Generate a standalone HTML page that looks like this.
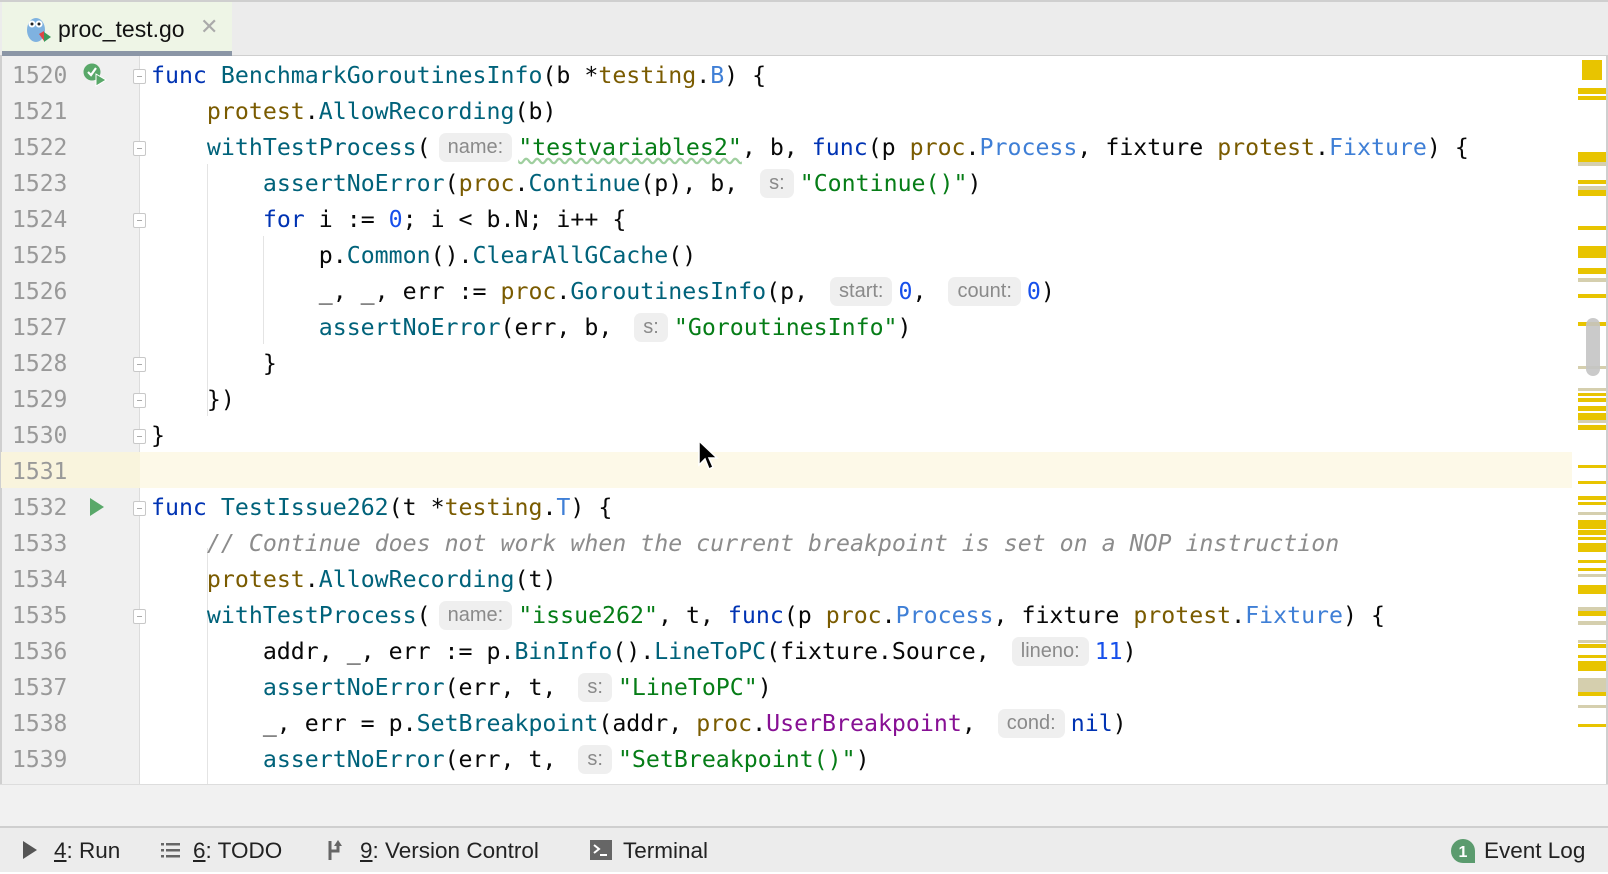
<!DOCTYPE html>
<html><head><meta charset="utf-8"><style>
*{margin:0;padding:0;box-sizing:border-box}
body{width:1608px;height:872px;overflow:hidden;background:#fff;position:relative;font-family:"DejaVu Sans Mono","Liberation Mono",monospace}
.tabbar{position:absolute;left:0;top:0;width:1608px;height:56px;background:#ececec;border-top:2px solid #cfcfcf;border-bottom:1px solid #cfcfcf}
.tab{position:absolute;left:2px;top:0;width:230px;height:54px;background:#eef5e6;border-bottom:5px solid #8b96a6}
.tab span{position:absolute;left:56px;top:14px;font:23px "Liberation Sans",sans-serif;color:#111}
.tab .x{left:198px;top:12px;color:#aaa;font-size:22px}
.gutter{position:absolute;left:0;top:56px;width:140px;height:728px;background:#f0f0f0;border-right:1px solid #dcdcdc;border-left:2px solid #cfcfcf}
.ln{position:absolute;left:12px;height:36px;line-height:36px;font-size:23px;color:#999}
.cl{position:absolute;left:151px;height:36px;line-height:36px;font-size:23.22px;color:#080808;white-space:pre}
.hl{position:absolute;left:2px;top:452px;width:1570px;height:36px;background:#fdf9e8}
.k{color:#0033b3}.f{color:#00627a}.p{color:#7a5b00}.t{color:#3f7fd6}.s{color:#067d17}.n{color:#1750eb}.c{color:#8c8c8c;font-style:italic}.u{color:#871094}
.h{display:inline-block;font:20px "Liberation Sans",sans-serif;color:#8a8a8a;background:#efefef;border-radius:7px;padding:0 9px;line-height:29px;margin:0 6px 0 8px;vertical-align:2px}
.g{position:absolute;width:1px;background:#e4e4e4}
.fold{position:absolute;left:133px;width:13px;height:15px;border:1.5px solid #c8c8c8;background:#fff;border-radius:2px}
.fold:after{content:"";position:absolute;left:2.5px;top:5.5px;width:5px;height:1.5px;background:#aaa}
.m{position:absolute;left:1578px;width:28px;background:#e8c400}
.b{position:absolute;left:1578px;width:28px;background:#d5cfae}
.bottom{position:absolute;left:0;top:784px;width:1608px;height:44px;background:#f1f1f1;border-top:1px solid #ddd;border-bottom:2px solid #cfcfcf}
.tw{position:absolute;left:0;top:828px;width:1608px;height:44px;background:#ececec}
.tw span{position:absolute;top:10px;font:22.5px "Liberation Sans",sans-serif;color:#222}
</style></head><body>
<div class="tabbar"><div class="tab">
<svg style="position:absolute;left:22px;top:12px" width="28" height="32" viewBox="0 0 28 32"><ellipse cx="12" cy="16" rx="9" ry="12" fill="#7fb2e0"/><circle cx="8" cy="10" r="3.5" fill="#fff"/><circle cx="15" cy="10" r="3.5" fill="#fff"/><circle cx="8" cy="10" r="1.5" fill="#222"/><circle cx="15" cy="10" r="1.5" fill="#222"/><path d="M15 20 L20 17 L20 27Z" fill="#d44"/><path d="M20 18 L27 23 L20 28Z" fill="#3a9a5b"/></svg>
<span>proc_test.go</span><span class="x">✕</span></div></div>
<div class="gutter"></div>
<div class="hl"></div>
<div style="position:absolute;left:1px;top:452px;width:139px;height:36px;background:#f9f4dd"></div>

<div class="g" style="left:207px;top:164px;height:252px"></div>
<div class="g" style="left:263px;top:236px;height:108px"></div>
<div class="g" style="left:207px;top:548px;height:236px"></div>

<div style="position:absolute;left:0;top:2px;width:100%;height:100%">
<div class="ln" style="top:56px">1520</div><div class="ln" style="top:92px">1521</div><div class="ln" style="top:128px">1522</div><div class="ln" style="top:164px">1523</div><div class="ln" style="top:200px">1524</div><div class="ln" style="top:236px">1525</div><div class="ln" style="top:272px">1526</div><div class="ln" style="top:308px">1527</div><div class="ln" style="top:344px">1528</div><div class="ln" style="top:380px">1529</div><div class="ln" style="top:416px">1530</div><div class="ln" style="top:452px">1531</div><div class="ln" style="top:488px">1532</div><div class="ln" style="top:524px">1533</div><div class="ln" style="top:560px">1534</div><div class="ln" style="top:596px">1535</div><div class="ln" style="top:632px">1536</div><div class="ln" style="top:668px">1537</div><div class="ln" style="top:704px">1538</div><div class="ln" style="top:740px">1539</div>

<div class="cl" style="top:56px"><span class="k">func</span> <span class="f">BenchmarkGoroutinesInfo</span>(b *<span class="p">testing</span>.<span class="t">B</span>) {</div>
<div class="cl" style="top:92px">    <span class="p">protest</span>.<span class="f">AllowRecording</span>(b)</div>
<div class="cl" style="top:128px">    <span class="f">withTestProcess</span>(<span class="h">name:</span><span class="s" style="text-decoration:underline wavy #9fcf9f">"testvariables2"</span>, b, <span class="k">func</span>(p <span class="p">proc</span>.<span class="t">Process</span>, fixture <span class="p">protest</span>.<span class="t">Fixture</span>) {</div>
<div class="cl" style="top:164px">        <span class="f">assertNoError</span>(<span class="p">proc</span>.<span class="f">Continue</span>(p), b, <span class="h">s:</span><span class="s">"Continue()"</span>)</div>
<div class="cl" style="top:200px">        <span class="k">for</span> i := <span class="n">0</span>; i &lt; b.N; i++ {</div>
<div class="cl" style="top:236px">            p.<span class="f">Common</span>().<span class="f">ClearAllGCache</span>()</div>
<div class="cl" style="top:272px">            _, _, err := <span class="p">proc</span>.<span class="f">GoroutinesInfo</span>(p, <span class="h">start:</span><span class="n">0</span>, <span class="h">count:</span><span class="n">0</span>)</div>
<div class="cl" style="top:308px">            <span class="f">assertNoError</span>(err, b, <span class="h">s:</span><span class="s">"GoroutinesInfo"</span>)</div>
<div class="cl" style="top:344px">        }</div>
<div class="cl" style="top:380px">    })</div>
<div class="cl" style="top:416px">}</div>
<div class="cl" style="top:488px"><span class="k">func</span> <span class="f">TestIssue262</span>(t *<span class="p">testing</span>.<span class="t">T</span>) {</div>
<div class="cl" style="top:524px">    <span class="c">// Continue does not work when the current breakpoint is set on a NOP instruction</span></div>
<div class="cl" style="top:560px">    <span class="p">protest</span>.<span class="f">AllowRecording</span>(t)</div>
<div class="cl" style="top:596px">    <span class="f">withTestProcess</span>(<span class="h">name:</span><span class="s">"issue262"</span>, t, <span class="k">func</span>(p <span class="p">proc</span>.<span class="t">Process</span>, fixture <span class="p">protest</span>.<span class="t">Fixture</span>) {</div>
<div class="cl" style="top:632px">        addr, _, err := p.<span class="f">BinInfo</span>().<span class="f">LineToPC</span>(fixture.Source, <span class="h">lineno:</span><span class="n">11</span>)</div>
<div class="cl" style="top:668px">        <span class="f">assertNoError</span>(err, t, <span class="h">s:</span><span class="s">"LineToPC"</span>)</div>
<div class="cl" style="top:704px">        _, err = p.<span class="f">SetBreakpoint</span>(addr, <span class="p">proc</span>.<span class="u">UserBreakpoint</span>, <span class="h">cond:</span><span class="k">nil</span>)</div>
<div class="cl" style="top:740px">        <span class="f">assertNoError</span>(err, t, <span class="h">s:</span><span class="s">"SetBreakpoint()"</span>)</div>
</div>

<svg style="position:absolute;left:82px;top:62px" width="26" height="26" viewBox="0 0 26 26"><circle cx="10" cy="10" r="8.5" fill="#59a869"/><path d="M6 10 L9 13 L14 6" stroke="#fff" stroke-width="2.2" fill="none"/><path d="M14 12 L24 18 L14 24Z" fill="#59a869" stroke="#fff" stroke-width="1"/></svg>
<svg style="position:absolute;left:89px;top:498px" width="16" height="18"><path d="M1 0 L15 9 L1 18Z" fill="#59a869"/></svg>

<div class="fold" style="top:69px"></div><div class="fold" style="top:141px"></div><div class="fold" style="top:213px"></div><div class="fold" style="top:357px"></div><div class="fold" style="top:393px"></div><div class="fold" style="top:429px"></div><div class="fold" style="top:501px"></div><div class="fold" style="top:609px"></div>

<svg style="position:absolute;left:697px;top:440px" width="24" height="34" viewBox="0 0 24 34"><path d="M2 1 L2 25 L8 19 L12 29 L16 27 L12 18 L20 18 Z" fill="#000" stroke="#fff" stroke-width="1.5"/></svg>

<div style="position:absolute;left:1606px;top:56px;width:2px;height:816px;background:#cfcfcf"></div>
<div class="m" style="left:1582px;width:20px;top:60px;height:20px"></div>
<div class="m" style="top:88px;height:6px"></div><div class="m" style="top:96px;height:4px"></div>
<div class="m" style="top:152px;height:10px"></div><div class="b" style="top:162px;height:4px"></div>
<div class="m" style="top:180px;height:4px"></div><div class="b" style="top:186px;height:4px"></div><div class="m" style="top:190px;height:6px"></div>
<div class="m" style="top:226px;height:4px"></div><div class="m" style="top:246px;height:12px"></div>
<div class="m" style="top:268px;height:6px"></div><div class="b" style="top:278px;height:4px"></div><div class="m" style="top:294px;height:4px"></div>
<div class="m" style="top:322px;height:4px"></div><div class="b" style="top:366px;height:3px"></div>
<div class="b" style="top:388px;height:3px"></div><div class="m" style="top:393px;height:3px"></div><div class="m" style="top:398px;height:4px"></div><div class="m" style="top:406px;height:5px"></div><div class="m" style="top:413px;height:7px"></div><div class="b" style="top:420px;height:3px"></div><div class="m" style="top:425px;height:5px"></div>
<div class="m" style="top:465px;height:3px"></div><div class="m" style="top:481px;height:3px"></div><div class="m" style="top:496px;height:4px"></div><div class="m" style="top:502px;height:3px"></div><div class="b" style="top:512px;height:3px"></div>
<div class="m" style="top:520px;height:9px"></div><div class="m" style="top:530px;height:5px"></div><div class="m" style="top:537px;height:3px"></div><div class="m" style="top:543px;height:9px"></div>
<div class="m" style="top:560px;height:3px"></div><div class="m" style="top:568px;height:3px"></div><div class="b" style="top:574px;height:3px"></div><div class="m" style="top:585px;height:9px"></div>
<div class="b" style="top:607px;height:4px"></div><div class="m" style="top:611px;height:5px"></div><div class="b" style="top:621px;height:4px"></div>
<div class="b" style="top:640px;height:3px"></div><div class="m" style="top:644px;height:4px"></div><div class="m" style="top:655px;height:3px"></div><div class="m" style="top:661px;height:10px"></div>
<div class="b" style="top:678px;height:14px"></div><div class="m" style="top:692px;height:4px"></div><div class="b" style="top:705px;height:3px"></div><div class="m" style="top:724px;height:3px"></div>
<div style="position:absolute;left:1586px;top:318px;width:14px;height:58px;background:#c4c4c4;border-radius:7px;opacity:.9"></div>

<div class="bottom"></div>
<div class="tw">
<svg style="position:absolute;left:22px;top:12px" width="16" height="20"><path d="M1 1 L15 10 L1 19Z" fill="#555"/></svg>
<span style="left:54px"><u>4</u>: Run</span>
<svg style="position:absolute;left:161px;top:14px" width="20" height="16"><g fill="#666"><rect x="0" y="1" width="3" height="2.5"/><rect x="5" y="1" width="14" height="2.5"/><rect x="0" y="7" width="3" height="2.5"/><rect x="5" y="7" width="14" height="2.5"/><rect x="0" y="13" width="3" height="2.5"/><rect x="5" y="13" width="14" height="2.5"/></g></svg>
<span style="left:193px"><u>6</u>: TODO</span>
<svg style="position:absolute;left:328px;top:11px" width="20" height="22"><path d="M2 2 V21 M2 12 H10 V6" stroke="#666" stroke-width="3" fill="none"/><path d="M6 7 L10 1 L14 7Z" fill="#666"/></svg>
<span style="left:360px"><u>9</u>: Version Control</span>
<svg style="position:absolute;left:590px;top:12px" width="22" height="20"><rect width="22" height="20" fill="#666"/><path d="M4 5 L9 9 L4 13" stroke="#fff" stroke-width="2" fill="none"/><rect x="10" y="14" width="7" height="2" fill="#fff"/></svg>
<span style="left:623px">Terminal</span>
<svg style="position:absolute;left:1450px;top:10px" width="26" height="26"><circle cx="13" cy="13" r="12" fill="#5b9b6e"/><rect x="13" y="13" width="12" height="12" fill="#5b9b6e"/><text x="13" y="19" font-family="Liberation Sans" font-weight="bold" font-size="16" fill="#fff" text-anchor="middle">1</text></svg>
<span style="left:1484px">Event Log</span>
</div>
</body></html>
